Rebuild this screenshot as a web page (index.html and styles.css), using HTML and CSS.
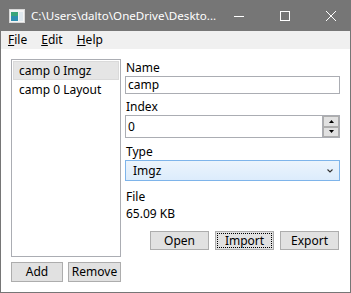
FILE: index.html
```html
<!DOCTYPE html>
<html lang="en">
<head>
    <title>Camp Editor</title>
    <link rel="stylesheet" href="styles.css">
</head>
<body>
    <div class="window">
        <div class="titlebar">
            <svg class="app-icon" width="16" height="14" viewBox="0 0 16 14">
                <rect x="0.5" y="0.5" width="15" height="13" fill="#f4f4f4" stroke="#d8d8d8"/>
                <rect x="2" y="3" width="7" height="9" fill="#2f8fb0"/>
                <rect x="2" y="3" width="7" height="4" fill="#3aa57a"/>
                <rect x="10" y="3" width="4" height="9" fill="#dfe8ee"/>
            </svg>
            <span class="title">C:\Users\dalto\OneDrive\Deskto...</span>
            <div class="controls">
                <div class="ctl">
                    <svg width="10" height="10" viewBox="0 0 10 10"><path d="M0 5.5h10" stroke="#fff" stroke-width="1"/></svg>
                </div>
                <div class="ctl">
                    <svg width="10" height="10" viewBox="0 0 10 10"><rect x="0.5" y="0.5" width="9" height="9" fill="none" stroke="#fff"/></svg>
                </div>
                <div class="ctl">
                    <svg width="10" height="10" viewBox="0 0 10 10"><path d="M0 0L10 10M10 0L0 10" stroke="#fff" stroke-width="1"/></svg>
                </div>
            </div>
        </div>
        <div class="menubar">
            <span class="menu-item"><u>F</u>ile</span>
            <span class="menu-item"><u>E</u>dit</span>
            <span class="menu-item"><u>H</u>elp</span>
        </div>
        <div class="client">
            <div class="left">
                <div class="listbox">
                    <div class="list-item selected">camp 0 Imgz</div>
                    <div class="list-item">camp 0 Layout</div>
                </div>
                <div class="left-buttons">
                    <button class="btn add">Add</button>
                    <button class="btn remove">Remove</button>
                </div>
            </div>
            <div class="right">
                <div class="label">Name</div>
                <div class="textbox name-box">camp</div>

                <div class="label">Index</div>
                <div class="spin">
                    <div class="textbox index-box">0</div>
                    <div class="spin-buttons">
                        <div class="spin-btn">
                            <svg width="5" height="3" viewBox="0 0 5 3"><path d="M0 3L2.5 0L5 3Z" fill="#000"/></svg>
                        </div>
                        <div class="spin-btn">
                            <svg width="5" height="3" viewBox="0 0 5 3"><path d="M0 0L2.5 3L5 0Z" fill="#000"/></svg>
                        </div>
                    </div>
                </div>

                <div class="label">Type</div>
                <div class="combo">
                    <span>Imgz</span>
                    <svg width="6" height="4" viewBox="0 0 6 4"><path d="M0.5 0.5L3 3L5.5 0.5" fill="none" stroke="#333" stroke-width="1.1"/></svg>
                </div>

                <div class="label file-label">File</div>
                <div class="file-size">65.09 KB</div>

                <div class="action-buttons">
                    <button class="btn">Open</button>
                    <button class="btn focused">Import</button>
                    <button class="btn">Export</button>
                </div>
            </div>
        </div>
    </div>
</body>
</html>
```

FILE: styles.css
```css
body {
    margin: 0;
    font-family: "Noto Sans", sans-serif;
    font-size: 12px;
    color: #000;
}

.window {
    width: 351px;
    height: 293px;
    box-sizing: border-box;
    border: 1px solid #767676;
    border-top: none;
    display: flex;
    flex-direction: column;
    background-color: #fff;
}

.titlebar {
    height: 31px;
    margin: 0 -1px;
    background-color: #767676;
    color: #fff;
    display: flex;
    align-items: center;
}

.app-icon {
    flex-shrink: 0;
    margin-left: 9px;
    margin-right: 6px;
}

.title {
    flex: 1;
    font-size: 11.6px;
    white-space: nowrap;
}

.controls {
    display: flex;
    height: 31px;
}

.ctl {
    width: 46px;
    display: flex;
    justify-content: center;
    align-items: center;
}

.menubar {
    height: 18px;
    background-color: #f0f0f0;
    display: flex;
    align-items: center;
}

.menu-item {
    padding: 0 7px;
    line-height: 18px;
}

.client {
    flex: 1;
    display: flex;
    gap: 4px;
    padding: 10px 10px 10px 10px;
}

.left {
    width: 110px;
    display: flex;
    flex-direction: column;
    gap: 5px;
}

.listbox {
    flex: 1;
    border: 1px solid #abadb3;
    padding: 1px;
}

.list-item {
    height: 17px;
    line-height: 17px;
    padding-left: 5px;
    border: 1px solid transparent;
}

.list-item.selected {
    background-color: #e5e5e5;
    border-color: #dadada;
}

.left-buttons {
    display: flex;
    gap: 5px;
}

.btn {
    height: 20px;
    padding: 0;
    font-family: "Noto Sans", sans-serif;
    font-size: 12px;
    color: #000;
    background-color: #e1e1e1;
    border: 1px solid #adadad;
    line-height: 16px;
}

.add {
    width: 52px;
}

.remove {
    width: 53px;
}

.right {
    flex: 1;
    display: flex;
    flex-direction: column;
}

.label {
    height: 17px;
    line-height: 17px;
    padding-left: 1px;
}

.textbox {
    box-sizing: border-box;
    border: 1px solid #abadb3;
    padding-left: 2px;
}

.name-box {
    height: 18px;
    line-height: 16px;
    margin-bottom: 4px;
}

.spin {
    display: flex;
    height: 23px;
    margin-bottom: 5px;
}

.index-box {
    flex: 1;
    line-height: 21px;
}

.spin-buttons {
    width: 17px;
    display: flex;
    flex-direction: column;
    border: 1px solid #abadb3;
    border-left: none;
    box-sizing: border-box;
}

.spin-btn {
    flex: 1;
    display: flex;
    justify-content: center;
    align-items: center;
    background-color: #e1e1e1;
    border: 1px solid #adadad;
}

.combo {
    height: 21px;
    box-sizing: border-box;
    border: 1px solid #7eb4ea;
    background: linear-gradient(#ecf4fc, #dcecfc);
    display: flex;
    align-items: center;
    justify-content: space-between;
    padding: 0 6px 0 7px;
    margin-bottom: 7px;
}

.file-size {
    height: 17px;
    line-height: 17px;
    padding-left: 1px;
}

.action-buttons {
    display: flex;
    justify-content: flex-end;
    gap: 6px;
    margin-top: 9px;
    padding-right: 1px;
}

.action-buttons .btn {
    width: 59px;
    height: 19px;
}

.focused {
    outline: 1px dotted #000;
    outline-offset: -3px;
}
```
